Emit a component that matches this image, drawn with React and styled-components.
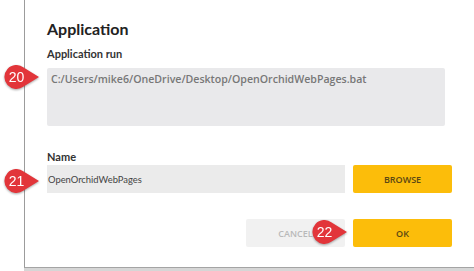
import styled, { createGlobalStyle } from 'styled-components';

const GlobalStyle = createGlobalStyle`
  html, body {
    margin: 0;
    background: #ffffff;
  }
  body {
    font-family: "Open Sans", "Noto Sans", sans-serif;
  }
`;

function Callout({ n, left, top }) {
    return (
        <Badge style={{ left, top }}>
            <svg width="36" height="26" viewBox="0 0 36 26">
                <path d="M35 13 L19.6 3.4 A12 12 0 1 0 19.6 22.6 Z" fill="#e2353a" />
            </svg>
            <BadgeNum>{n}</BadgeNum>
        </Badge>
    );
}

export default function App() {
    return (
        <>
            <GlobalStyle />
            <Page>
                <Frame>
                    <Dialog>
                        <Title>Application</Title>
                        <Label>Application run</Label>
                        <RunBox>C:/Users/mike6/OneDrive/Desktop/OpenOrchidWebPages.bat</RunBox>
                        <Label $gap={24}>Name</Label>
                        <Row $gap={1}>
                            <NameInput>OpenOrchidWebPages</NameInput>
                            <Button>BROWSE</Button>
                        </Row>
                        <Row $gap={26} $end>
                            <Button $muted>CANCEL</Button>
                            <Button>OK</Button>
                        </Row>
                    </Dialog>
                    <Strip />
                </Frame>
                <Callout n="20" left={4} top={64} />
                <Callout n="21" left={4} top={168} />
                <Callout n="22" left={312} top={219} />
            </Page>
        </>
    );
}

const Page = styled.div`
position: relative;
height: 271px;
padding-left: 24px;
overflow: hidden;
`
const Frame = styled.div`
display: flex;
flex-direction: column;
height: 271px;
`
const Dialog = styled.div`
box-sizing: border-box;
height: 268px;
padding: 19px 0 0 22px;
border-left: 1px solid #9c9c9c;
border-bottom: 1px solid #a4a4a4;
background: #ffffff;
display: flex;
flex-direction: column;
`
const Strip = styled.div`
flex: 1;
background: #d6d6d6;
`
const Title = styled.div`
font-family: Lato, "Open Sans", sans-serif;
font-size: 16px;
line-height: 20px;
font-weight: 700;
color: #222222;
`
const Label = styled.div`
margin-top: ${(p) => p.$gap || 8}px;
font-family: Lato, "Open Sans", sans-serif;
font-size: 11px;
line-height: 14px;
font-weight: 700;
color: #333333;
`
const RunBox = styled.div`
box-sizing: border-box;
margin-top: 7px;
width: 398px;
height: 58px;
padding: 4px 4px;
background: #e9e9eb;
border-radius: 2px;
font-size: 10.6px;
line-height: 14px;
font-weight: 600;
color: #777777;
`
const Row = styled.div`
display: flex;
gap: 8px;
width: 405px;
margin-top: ${(p) => p.$gap}px;
justify-content: ${(p) => (p.$end ? 'flex-end' : 'flex-start')};
`
const NameInput = styled.div`
box-sizing: border-box;
width: 298px;
height: 28px;
padding-left: 1px;
display: flex;
align-items: center;
background: #ebebeb;
font-family: Lato, "Open Sans", sans-serif;
font-size: 9.4px;
color: #444444;
`
const Button = styled.div`
width: 99px;
height: 28px;
border-radius: 2px;
display: flex;
align-items: center;
justify-content: center;
background: ${(p) => (p.$muted ? '#f1f1f1' : '#fcbd0a')};
color: ${(p) => (p.$muted ? '#b9b9b9' : '#5a4714')};
font-size: 9px;
font-weight: 600;
`
const Badge = styled.div`
position: absolute;
width: 36px;
height: 26px;
filter: drop-shadow(0 1px 1px rgba(0, 0, 0, 0.35));
svg {
  display: block;
}
`
const BadgeNum = styled.span`
position: absolute;
left: 0;
top: 0;
width: 25px;
height: 26px;
display: flex;
align-items: center;
justify-content: center;
font-family: "Liberation Sans", Arial, sans-serif;
font-size: 14px;
color: #ffffff;
`
